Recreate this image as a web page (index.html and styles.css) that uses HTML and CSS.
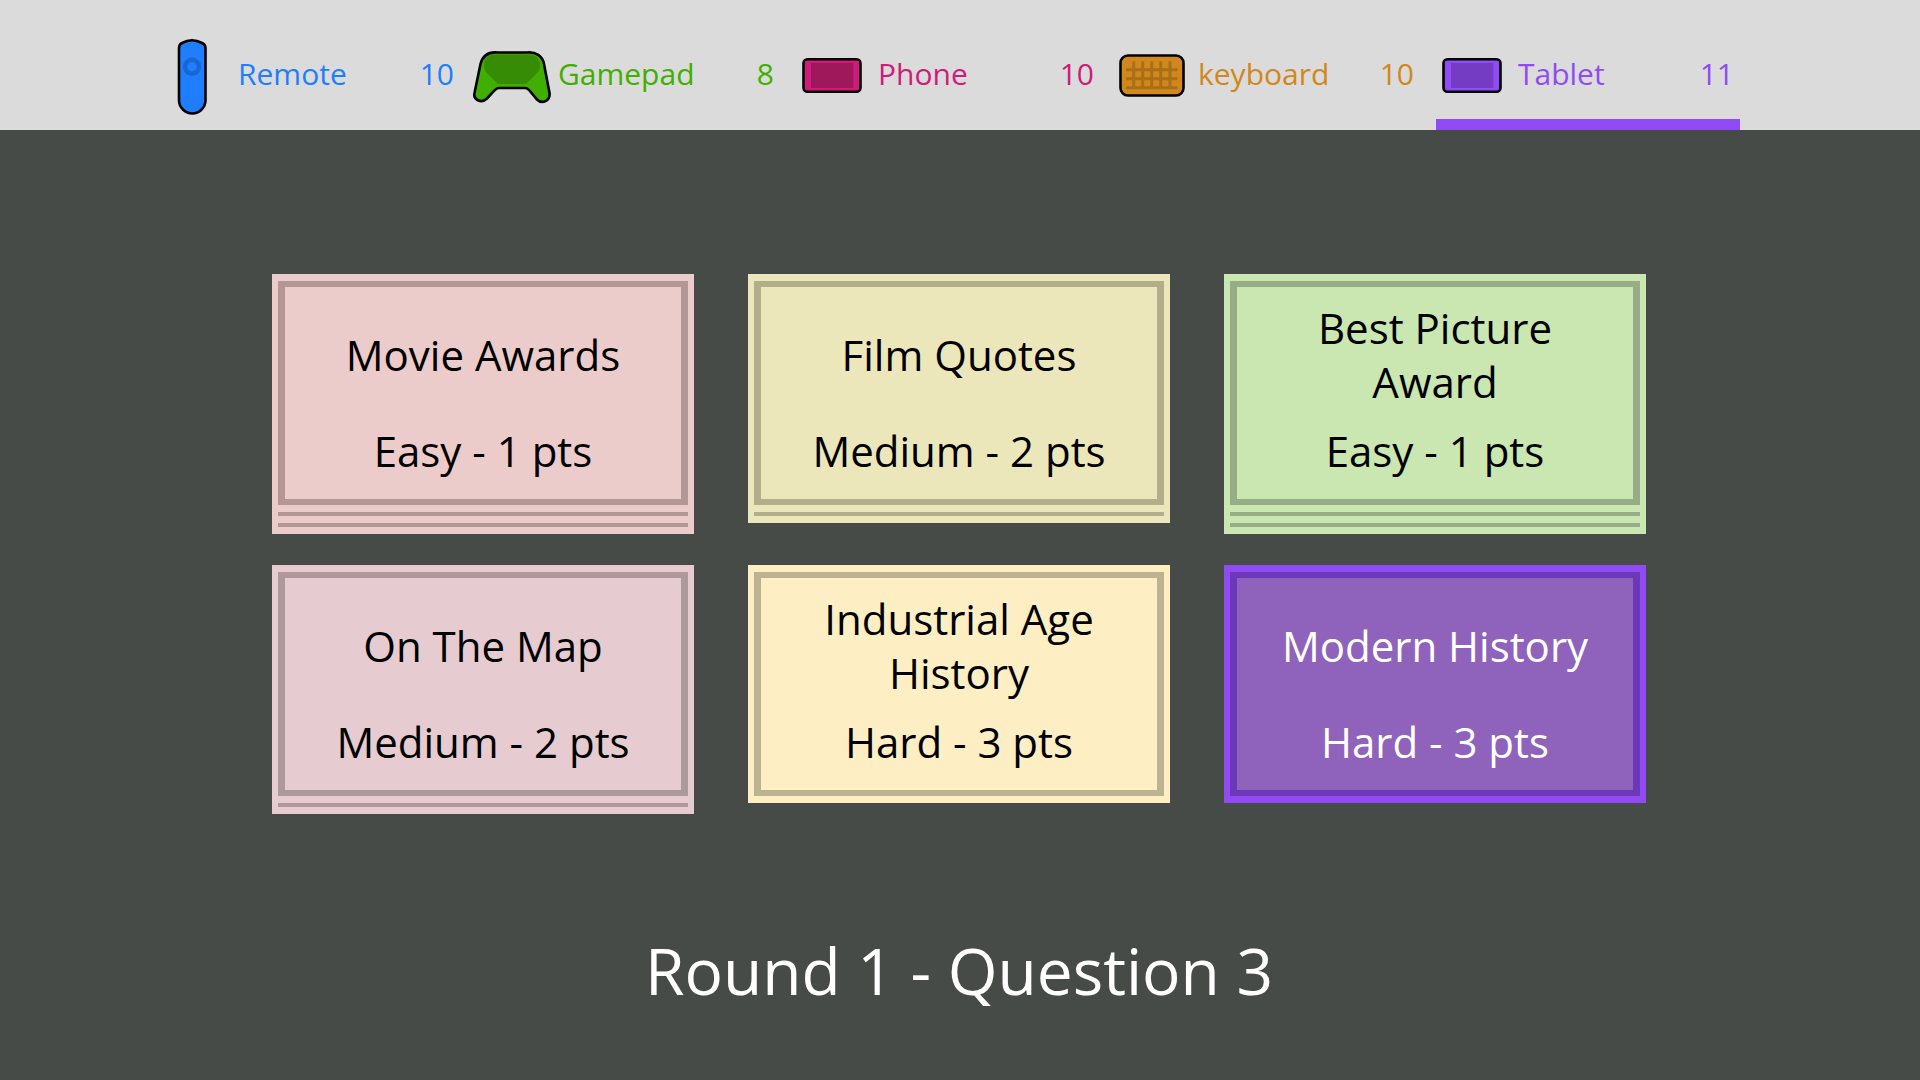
FILE: index.html
```html
<!DOCTYPE html>
<html lang="en">
<head>
<meta charset="utf-8">
<meta name="viewport" content="width=device-width, initial-scale=1">
<title>Round 1 - Question 3</title>
<link rel="stylesheet" href="styles.css">
</head>
<body>
<header class="scoreboard">
  <ul class="players">
    <li class="player player-remote">
      <svg class="player-icon" viewBox="0 0 80 80" aria-hidden="true">
        <path class="shape" d="M27 12Q27 8.500 30 7Q40 1.500 50 7Q53.500 8.500 53.500 12V64C53.500 72 47 77.500 40.300 77.500S27 72 27 64Z"/>
        <circle class="detail-line" cx="40" cy="30.700" r="7" stroke-width="4.500"/>
      </svg>
      <span class="player-name">Remote</span>
      <span class="player-score">10</span>
    </li>
    <li class="player player-gamepad">
      <svg class="player-icon" viewBox="0 0 80 80" aria-hidden="true">
        <path class="shape" d="M26 16.500H54.500C64 15.500 70.500 20 72 28L77.500 57C78.500 65 70 68.500 65 63.500L57.500 54.500Q55.500 52 53 52H27Q24.500 52 22.500 54.500L15 62.500C9 68 1 63.500 2.500 57L8.500 28C10.500 20 16 15.500 26 16.500Z"/>
        <path class="detail" d="M24 18.500H56C64 18.500 68 23 68 29C68 33 67 35 65 37L54 48H26L15 37C13 35 12 33 12 29C12 23 16 18.500 24 18.500Z"/>
      </svg>
      <span class="player-name">Gamepad</span>
      <span class="player-score">8</span>
    </li>
    <li class="player player-phone">
      <svg class="player-icon" viewBox="0 0 80 80" aria-hidden="true">
        <rect class="shape" x="11.500" y="23.300" width="57" height="32.400" rx="4"/>
        <rect class="detail" x="19" y="27" width="42.300" height="25"/>
      </svg>
      <span class="player-name">Phone</span>
      <span class="player-score">10</span>
    </li>
    <li class="player player-keyboard">
      <svg class="player-icon" viewBox="0 0 80 80" aria-hidden="true">
        <rect class="shape" x="8.500" y="19.500" width="63" height="40" rx="7.500"/>
        <path class="detail-line" stroke-width="3" d="M14 33.700H65.500M14 42.700H65.500M14 51.700H65.500M21.700 25.500V52M30.700 25.500V52M39.700 25.500V52M48.700 25.500V52M58 25.500V52"/>
      </svg>
      <span class="player-name">keyboard</span>
      <span class="player-score">10</span>
    </li>
    <li class="player player-tablet active">
      <svg class="player-icon" viewBox="0 0 80 80" aria-hidden="true">
        <rect class="shape" x="11.500" y="23.300" width="57" height="32.400" rx="4"/>
        <rect class="detail" x="19" y="27" width="42.300" height="25"/>
      </svg>
      <span class="player-name">Tablet</span>
      <span class="player-score">11</span>
    </li>
  </ul>
</header>
<main class="board">
  <div class="categories">
    <button type="button" class="card card-rose">
      <span class="card-face"><span class="card-title">Movie Awards</span><span class="card-points">Easy - 1 pts</span></span>
      <span class="card-edge"></span><span class="card-edge"></span>
    </button>
    <button type="button" class="card card-khaki">
      <span class="card-face"><span class="card-title">Film Quotes</span><span class="card-points">Medium - 2 pts</span></span>
      <span class="card-edge"></span>
    </button>
    <button type="button" class="card card-green">
      <span class="card-face"><span class="card-title">Best Picture Award</span><span class="card-points">Easy - 1 pts</span></span>
      <span class="card-edge"></span><span class="card-edge"></span>
    </button>
    <button type="button" class="card card-mauve">
      <span class="card-face"><span class="card-title">On The Map</span><span class="card-points">Medium - 2 pts</span></span>
      <span class="card-edge"></span>
    </button>
    <button type="button" class="card card-cream">
      <span class="card-face"><span class="card-title">Industrial Age History</span><span class="card-points">Hard - 3 pts</span></span>
    </button>
    <button type="button" class="card card-selected">
      <span class="card-face"><span class="card-title">Modern History</span><span class="card-points">Hard - 3 pts</span></span>
    </button>
  </div>
  <h1 class="round">Round 1 - Question 3</h1>
</main>
</body>
</html>
```
FILE: styles.css
```css
* {
  box-sizing: border-box;
}

body {
  margin: 0;
  min-height: 100vh;
  background: #464b47;
  font-family: "Open Sans", "Noto Sans", sans-serif;
}

.scoreboard {
  padding: 36px 180px 0 152px;
  background: #dbdbdb;
}

.players {
  display: grid;
  grid-template-columns: repeat(5, 1fr);
  gap: 12px;
  margin: 0;
  padding: 0;
  list-style: none;
}

.player {
  display: grid;
  grid-template-columns: 80px 1fr auto;
  grid-template-rows: 83px 11px;
  column-gap: 6px;
  color: var(--player);
  font-size: 30px;
  line-height: 40px;
}

.player-icon {
  width: 80px;
  height: 80px;
}

.player-name,
.player-score {
  padding-top: 18px;
}

.player-score {
  padding-right: 6px;
}

.player.active::after {
  content: "";
  grid-column: 1 / -1;
  grid-row: 2;
  margin-left: 4px;
  background: var(--player);
}

.player-remote { --player: #1f7dff; --detail: #1a66cf; }
.player-gamepad { --player: #41af00; --detail: #368c04; }
.player-phone { --player: #cf1b7a; --detail: #a0185c; }
.player-keyboard { --player: #d0881c; --detail: #a86e18; }
.player-tablet { --player: #904bf4; --detail: #733cc3; }

.shape {
  fill: var(--player);
  stroke: #000;
  stroke-width: 2.6px;
}

.detail {
  fill: var(--detail);
}

.detail-line {
  fill: none;
  stroke: var(--detail);
}

.board {
  padding: 144px 274px 40px 272px;
}

.categories {
  display: grid;
  grid-template-columns: repeat(3, 1fr);
  gap: 31px 54px;
  align-items: start;
}

.card {
  display: flex;
  flex-direction: column;
  gap: 7px;
  padding: 7px 6px;
  border: 0;
  background: var(--card);
  color: #000;
  font: inherit;
  font-size: 42px;
  line-height: 54px;
  cursor: pointer;
}

.card-face {
  display: flex;
  flex-direction: column;
  gap: 15px;
  width: 100%;
  padding: 14px 40px 21px;
  border: solid var(--frame);
  border-width: 6px 7px;
  background: var(--face, var(--card));
}

.card-title {
  display: flex;
  align-items: center;
  justify-content: center;
  min-height: 108px;
}

.card-edge {
  width: 100%;
  height: 4px;
  background: var(--frame);
}

.card-rose { --card: #ecccca; --frame: #b29796; }
.card-khaki { --card: #ece6bb; --frame: #b2ad8b; }
.card-green { --card: #cae6b1; --frame: #97ad85; }
.card-mauve { --card: #e6cbd0; --frame: #ad989c; }
.card-cream { --card: #fdeec3; --frame: #bdb291; }

.card-selected {
  --card: #904bf4;
  --frame: #6d38b7;
  --face: #8f62bb;
  color: #fff;
}

.round {
  margin: 113px 0 0;
  color: #fff;
  font-size: 64px;
  font-weight: 400;
  line-height: 88px;
  text-align: center;
}
```
